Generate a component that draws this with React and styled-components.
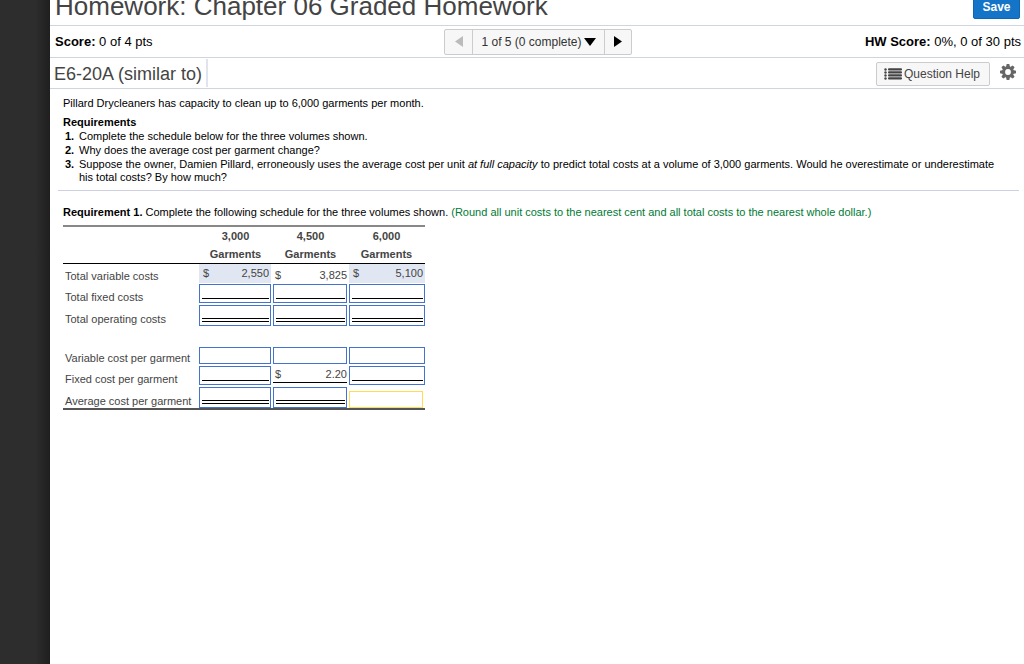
import React from "react";
import styled, { createGlobalStyle } from "styled-components";

const GlobalStyle = createGlobalStyle`
  * {
    box-sizing: border-box;
  }
  body {
    margin: 0;
    background: #fff;
    color: #000;
    font-family: "Liberation Sans", Arial, Helvetica, sans-serif;
    font-size: 11px;
  }
  button, input {
    font-family: inherit;
  }
`;

const Page = styled.div`
  display: flex;
  min-height: 100vh;
`;

const Sidebar = styled.aside`
  flex: 0 0 50px;
  background: linear-gradient(to right, #2d2d2d 70%, #1f1f1f);
`;

const Main = styled.main`
  flex: 1;
  min-width: 0;
`;

const Bar = styled.div`
  display: flex;
  align-items: center;
  justify-content: space-between;
  border-bottom: 1px solid #d0d3e0;
`;

const Header = styled(Bar)`
  height: 26px;
  align-items: flex-end;
  overflow: hidden;
  padding: 0 4px 0 5px;
`;

const Title = styled.h1`
  margin: 0;
  padding-bottom: 4px;
  color: #444;
  font-size: 26px;
  line-height: 30px;
  font-weight: normal;
  white-space: nowrap;
`;

const SaveButton = styled.button`
  height: 26px;
  width: 47px;
  margin-bottom: 6px;
  padding: 2px 0 0;
  border: 1px solid #0d66b3;
  border-radius: 2px;
  background: #1374c8;
  color: #fff;
  font-size: 12px;
  font-weight: bold;
`;

const ScoreBar = styled(Bar)`
  display: grid;
  grid-template-columns: 1fr auto 1fr;
  height: 32px;
  padding: 0 3px 0 5px;
  font-size: 13px;
`;

const Score = styled.div`
  text-align: ${(props) => props.$align || "left"};
  white-space: nowrap;
`;

const Pager = styled.div`
  display: flex;
  height: 26px;
  border: 1px solid #ccc;
  border-radius: 2px;
  background: #f7f7f7;
`;

const PagerButton = styled.button`
  display: flex;
  align-items: center;
  justify-content: center;
  gap: 2px;
  min-width: 27px;
  padding: 0 ${(props) => (props.$wide ? "8px" : "0")};
  border: 0;
  background: transparent;
  color: #333;
  font-size: 12px;
  white-space: nowrap;
  & + & {
    border-left: 1px solid #ccc;
  }
`;

const QuestionBar = styled(Bar)`
  height: 31px;
  padding: 0 8px 0 4px;
`;

const QuestionName = styled.h2`
  display: flex;
  align-items: center;
  height: 28px;
  margin: 0;
  padding: 2px 4px 0 0;
  border-right: 2px solid #e0e4ec;
  color: #444;
  font-size: 18px;
  font-weight: normal;
`;

const Tools = styled.div`
  display: flex;
  align-items: center;
  gap: 10px;
`;

const HelpButton = styled.button`
  display: flex;
  align-items: center;
  gap: 2px;
  height: 24px;
  margin-top: 1px;
  padding: 0 9px 0 7px;
  border: 1px solid #ccc;
  border-radius: 2px;
  background: #f7f7f7;
  color: #444;
  font-size: 12px;
`;

const IconButton = styled.button`
  display: flex;
  padding: 0 0 2px;
  border: 0;
  background: none;
`;

const Problem = styled.section`
  padding: 8px 5px 0 8px;
`;

const Text = styled.p`
  margin: 0;
  padding-left: 5px;
  line-height: 13px;
`;

const SubTitle = styled.h3`
  margin: 6px 0 0;
  padding-left: 5px;
  font-size: 11px;
  line-height: 13px;
`;

const Requirements = styled.ol`
  margin: 0;
  padding: 0 8px 0 7px;
  list-style: none;
`;

const Requirement = styled.li`
  display: flex;
  line-height: 13px;
  margin-top: 1px;
  b {
    flex: 0 0 14px;
  }
`;

const Divider = styled.hr`
  height: 1px;
  margin: 6px 0 15px;
  border: 0;
  background: #ccd0e0;
`;

const Hint = styled.span`
  color: #007a33;
`;

const Schedule = styled.table`
  table-layout: fixed;
  width: 362px;
  margin: 6px 0 0 5px;
  border-collapse: separate;
  border-spacing: 0;
  border-top: 2px solid #888;
  border-bottom: 2px solid #555;
  color: #444;
`;

const HeadCell = styled.th`
  width: ${(props) => props.$width};
  height: 37px;
  padding: 0 1px 0 0;
  border-bottom: 1px solid #000;
  line-height: 18px;
`;

const Row = styled.tr`
  height: ${(props) => props.$height};
`;

const labelTop = { none: "4px", single: "6px", double: "7px" };

const Label = styled.th`
  padding: ${(props) => labelTop[props.$line] || "5px"} 0 0 2px;
  font-weight: normal;
  line-height: 14px;
  text-align: left;
  vertical-align: top;
  white-space: nowrap;
`;

const Cell = styled.td`
  padding: 0 2px 0 0;
  vertical-align: ${(props) => props.$align || "top"};
  &:last-child {
    padding-right: ${(props) => (props.$align ? "2px" : "0")};
  }
`;

const Amount = styled.div`
  display: flex;
  justify-content: space-between;
  height: ${(props) => (props.$underlined ? "17px" : "19px")};
  padding: ${(props) => (props.$shaded ? "0 2px 0 4px" : "0 0 0 2px")};
  background: ${(props) => (props.$shaded ? "#e1e7f2" : "transparent")};
  border-bottom: ${(props) => (props.$underlined ? "1px solid #000" : "0")};
  line-height: ${(props) => (props.$shaded ? "19px" : props.$underlined ? "16px" : "22px")};
`;

const Field = styled.div`
  height: ${(props) => props.$height};
  padding: 0 1px 0 2px;
  border: 1px solid ${(props) => (props.$active ? "#ffdc50" : "#4472cf")};
`;

const lines = { none: "0", single: "1px solid #000", double: "4px double #000" };

const Answer = styled.input`
  display: block;
  width: 100%;
  height: calc(100% - ${(props) => (props.$line === "none" ? "0px" : "3px")});
  padding: 0;
  border: 0;
  border-bottom: ${(props) => lines[props.$line]};
  background: transparent;
  font-size: 11px;
  text-align: right;
  outline: none;
`;

const volumes = ["3,000", "4,500", "6,000"];

const rows = [
  { label: "Total variable costs", height: "20px", cells: [{ amount: "2,550", shaded: true }, { amount: "3,825" }, { amount: "5,100", shaded: true }] },
  { label: "Total fixed costs", height: "21px", field: "19px", line: "single", cells: [{}, {}, {}] },
  { label: "Total operating costs", height: "42px", field: "21px", line: "double", cells: [{}, {}, {}] },
  { label: "Variable cost per garment", height: "19px", field: "17px", line: "none", cells: [{}, {}, {}] },
  { label: "Fixed cost per garment", height: "21px", field: "19px", line: "single", cells: [{}, { amount: "2.20", underlined: true }, {}] },
  { label: "Average cost per garment", height: "21px", field: "21px", line: "double", cells: [{}, {}, { active: true }] },
];

function Triangle({ points, color = "#000", width = 8, height = 11 }) {
  return (
    <svg width={width} height={height} aria-hidden="true">
      <polygon points={points} fill={color} />
    </svg>
  );
}

function ListIcon() {
  return (
    <svg width="18" height="12" viewBox="0 0 18 12" fill="#444" aria-hidden="true">
      {[0, 3, 6, 9].map((y) => (
        <React.Fragment key={y}>
          <circle cx="1.5" cy={y + 1.5} r="1.2" />
          <rect x="4" y={y + 0.3} width="14" height="2.3" rx="1" />
        </React.Fragment>
      ))}
    </svg>
  );
}

function GearIcon() {
  const teeth = [0, 45, 90, 135, 180, 225, 270, 315];
  return (
    <svg width="16" height="16" viewBox="0 0 16 16" aria-hidden="true">
      <circle cx="8" cy="8" r="4.3" fill="none" stroke="#666" strokeWidth="2.8" />
      {teeth.map((angle) => (
        <path key={angle} d="M6 3 6.7 0h2.6l.7 3z" fill="#666" transform={`rotate(${angle} 8 8)`} />
      ))}
    </svg>
  );
}

function ScheduleCell({ row, cell, name }) {
  if (cell.amount) {
    return (
      <Cell>
        <Amount $shaded={cell.shaded} $underlined={cell.underlined}>
          <span>$</span>
          <span>{cell.amount}</span>
        </Amount>
      </Cell>
    );
  }
  return (
    <Cell $align={cell.active && "bottom"}>
      <Field $height={cell.active ? "17px" : row.field} $active={cell.active}>
        <Answer type="text" aria-label={name} $line={cell.active ? "none" : row.line} />
      </Field>
    </Cell>
  );
}

export default function App() {
  return (
    <Page>
      <GlobalStyle />
      <Sidebar />
      <Main>
        <Header as="header">
          <Title>Homework: Chapter 06 Graded Homework</Title>
          <SaveButton type="button">Save</SaveButton>
        </Header>
        <ScoreBar>
          <Score>
            <b>Score:</b> 0 of 4 pts
          </Score>
          <Pager>
            <PagerButton type="button" aria-label="Previous question" disabled>
              <Triangle points="8,0 8,11 0,5.5" color="#bbb" />
            </PagerButton>
            <PagerButton type="button" $wide>
              1 of 5 (0 complete)
              <Triangle points="0,0 12,0 6,8" width={12} height={8} />
            </PagerButton>
            <PagerButton type="button" aria-label="Next question">
              <Triangle points="0,0 8,5.5 0,11" />
            </PagerButton>
          </Pager>
          <Score $align="right">
            <b>HW Score:</b> 0%, 0 of 30 pts
          </Score>
        </ScoreBar>
        <QuestionBar>
          <QuestionName>E6-20A (similar to)</QuestionName>
          <Tools>
            <HelpButton type="button">
              <ListIcon />
              Question Help
            </HelpButton>
            <IconButton type="button" aria-label="Settings">
              <GearIcon />
            </IconButton>
          </Tools>
        </QuestionBar>
        <Problem>
          <Text>Pillard Drycleaners has capacity to clean up to 6,000 garments per month.</Text>
          <SubTitle>Requirements</SubTitle>
          <Requirements>
            <Requirement>
              <b>1.</b>
              <span>Complete the schedule below for the three volumes shown.</span>
            </Requirement>
            <Requirement>
              <b>2.</b>
              <span>Why does the average cost per garment change?</span>
            </Requirement>
            <Requirement>
              <b>3.</b>
              <span>
                Suppose the owner, Damien Pillard, erroneously uses the average cost per unit <i>at full capacity</i> to
                predict total costs at a volume of 3,000 garments. Would he overestimate or underestimate his total
                costs? By how much?
              </span>
            </Requirement>
          </Requirements>
          <Divider />
          <Text>
            <b>Requirement 1.</b> Complete the following schedule for the three volumes shown.{" "}
            <Hint>(Round all unit costs to the nearest cent and all total costs to the nearest whole dollar.)</Hint>
          </Text>
          <Schedule>
            <thead>
              <tr>
                <HeadCell $width="136px" />
                <HeadCell $width="74px">3,000<br />Garments</HeadCell>
                <HeadCell $width="76px">4,500<br />Garments</HeadCell>
                <HeadCell $width="76px">6,000<br />Garments</HeadCell>
              </tr>
            </thead>
            <tbody>
              {rows.map((row) => (
                <Row key={row.label} $height={row.height}>
                  <Label scope="row" $line={row.line}>
                    {row.label}
                  </Label>
                  {row.cells.map((cell, i) => (
                    <ScheduleCell key={volumes[i]} row={row} cell={cell} name={`${row.label}, ${volumes[i]} garments`} />
                  ))}
                </Row>
              ))}
            </tbody>
          </Schedule>
        </Problem>
      </Main>
    </Page>
  );
}
